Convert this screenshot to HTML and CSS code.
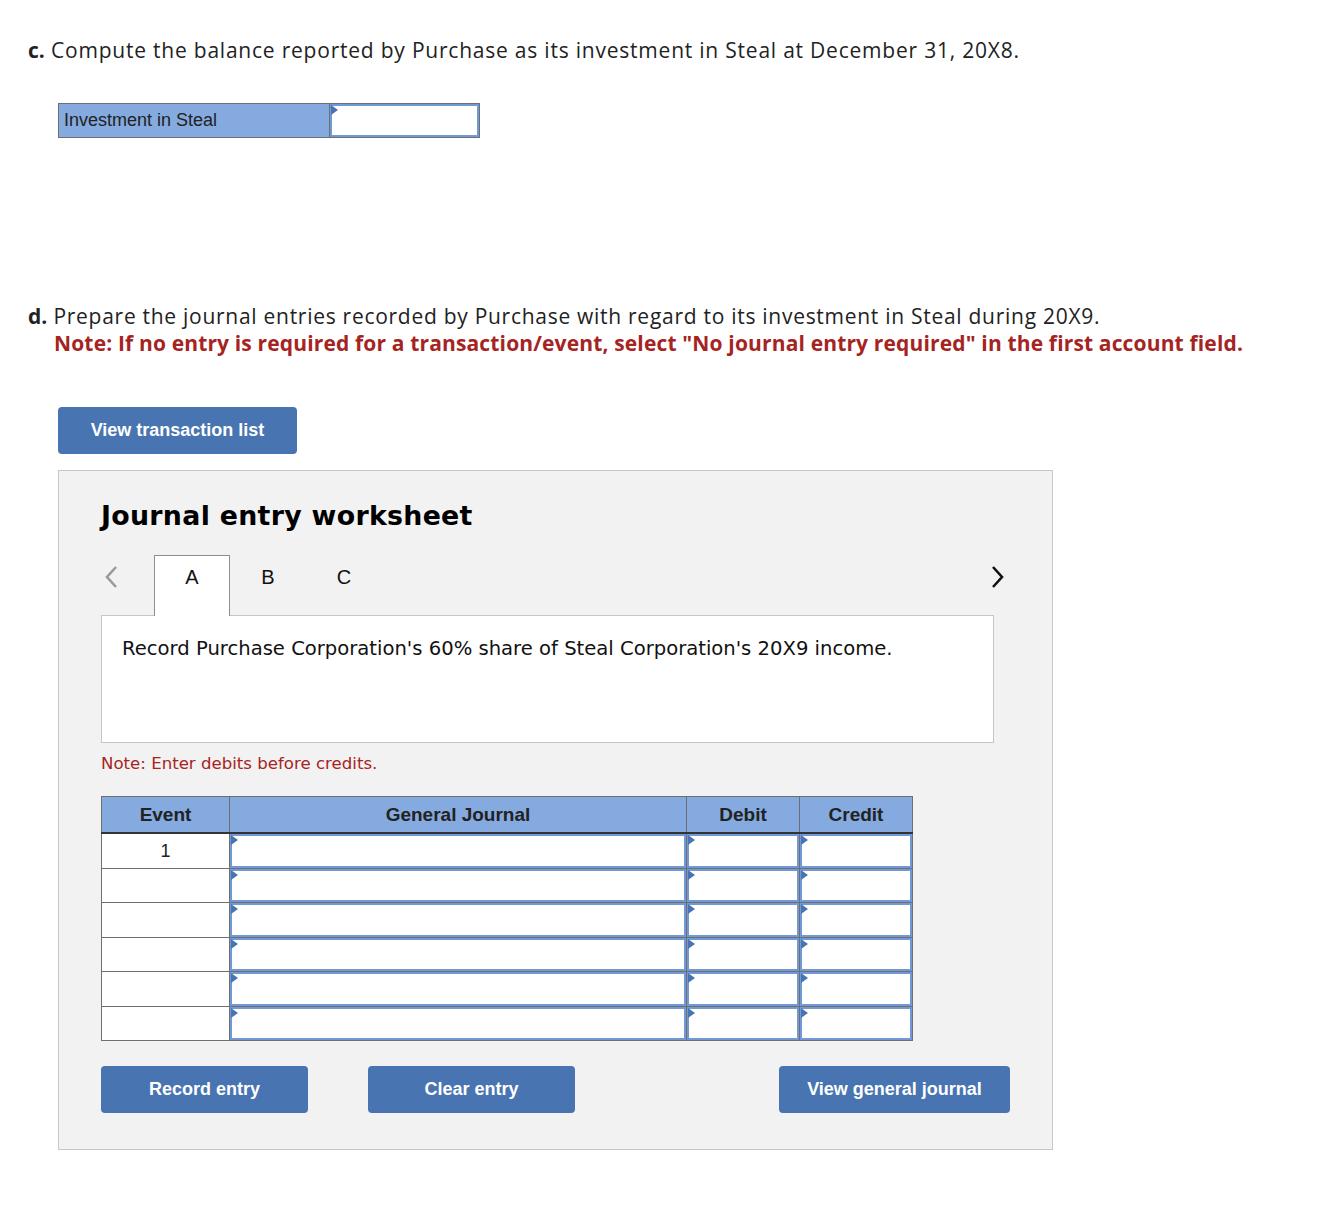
FILE: index.html
```html
<!DOCTYPE html>
<html lang="en">
<head>
  <meta charset="UTF-8">
  <title>Journal entry worksheet</title>
  <link rel="stylesheet" href="styles.css">
</head>
<body>

  <!-- part c -->
  <p class="question"><strong>c.</strong> Compute the balance reported by Purchase as its investment in Steal at December 31, 20X8.</p>

  <table class="answer-table">
    <tr>
      <td class="answer-label">Investment in Steal</td>
      <td class="answer-cell"><div class="field"></div></td>
    </tr>
  </table>

  <!-- part d -->
  <p class="question question-d"><strong>d.</strong> Prepare the journal entries recorded by Purchase with regard to its investment in Steal during 20X9.</p>
  <p class="note-red">Note: If no entry is required for a transaction/event, select "No journal entry required" in the first account field.</p>

  <button class="btn btn-list">View transaction list</button>

  <div class="worksheet">
    <h2>Journal entry worksheet</h2>

    <div class="tabs">
      <span class="arrow arrow-left">
        <svg width="16" height="24" viewBox="0 0 16 24"><path d="M13 2 L4 12 L13 22" fill="none" stroke="#9a9a9a" stroke-width="2.6"/></svg>
      </span>
      <span class="tab active">A</span>
      <span class="tab">B</span>
      <span class="tab">C</span>
      <span class="arrow arrow-right">
        <svg width="16" height="24" viewBox="0 0 16 24"><path d="M3 2 L12 12 L3 22" fill="none" stroke="#111" stroke-width="2.6"/></svg>
      </span>
    </div>

    <div class="description">Record Purchase Corporation's 60% share of Steal Corporation's 20X9 income.</div>

    <p class="note-small">Note: Enter debits before credits.</p>

    <table class="journal">
      <thead>
        <tr>
          <th class="col-event">Event</th>
          <th class="col-account">General Journal</th>
          <th class="col-money">Debit</th>
          <th class="col-money">Credit</th>
        </tr>
      </thead>
      <tbody id="rows"></tbody>
    </table>

    <div class="actions">
      <button class="btn btn-record">Record entry</button>
      <button class="btn btn-clear">Clear entry</button>
      <button class="btn btn-view">View general journal</button>
    </div>
  </div>

  <script>
    const tbody = document.getElementById("rows");

    for (let i = 0; i < 6; i++) {
      const tr = document.createElement("tr");
      const ev = document.createElement("td");
      ev.className = "event";
      ev.textContent = i === 0 ? "1" : "";
      tr.appendChild(ev);

      for (let c = 0; c < 3; c++) {
        const td = document.createElement("td");
        td.className = "input-cell";
        td.innerHTML = '<div class="field"></div>';
        tr.appendChild(td);
      }
      tbody.appendChild(tr);
    }
  </script>

</body>
</html>
```

FILE: styles.css
```css
body {
  margin: 0;
  padding: 0;
  font-family: "Open Sans", Arial, sans-serif;
  color: #222;
  background: white;
}

.question {
  margin: 0;
  padding-left: 28px;
  font-size: 21px;
  line-height: 28px;
  letter-spacing: 0.78px;
  padding-top: 36px;
}

.question strong {
  font-weight: 700;
  letter-spacing: 0;
}

.question-d {
  padding-top: 0;
  margin-top: 164px;
  letter-spacing: 0.72px;
}

.note-red {
  margin: 0 0 0 54px;
  font-size: 21px;
  line-height: 27px;
  font-weight: 700;
  letter-spacing: 0.15px;
  color: #a6241f;
}

/* answer box for part c */
.answer-table {
  border-collapse: collapse;
  margin: 39px 0 0 58px;
  font-family: "Liberation Sans", Arial, sans-serif;
}

.answer-label {
  width: 265px;
  height: 33px;
  background: #84aadf;
  border: 1px solid #6f6f6f;
  padding: 0 0 0 5px;
  font-size: 18px;
  color: #222;
}

.answer-cell {
  width: 149px;
  border: 1px solid #6f6f6f;
}

.answer-cell,
.input-cell {
  position: relative;
  padding: 0;
  background: white;
}

.field {
  box-sizing: border-box;
  height: 100%;
  min-height: 33px;
  border: 2px solid #7199d6;
  background: white;
}

.answer-cell::before,
.input-cell::before {
  content: "";
  position: absolute;
  left: 1px;
  top: 1px;
  border-left: 7px solid #4874b2;
  border-top: 5px solid transparent;
  border-bottom: 5px solid transparent;
}

/* buttons */
.btn {
  flex-shrink: 0;
  font-family: "Liberation Sans", Arial, sans-serif;
  font-size: 18px;
  font-weight: bold;
  color: white;
  background: #4874b2;
  border: none;
  border-radius: 4px;
  height: 47px;
  cursor: pointer;
}

.btn-list {
  display: block;
  width: 239px;
  margin: 50px 0 0 58px;
}

/* worksheet panel */
.worksheet {
  box-sizing: border-box;
  width: 995px;
  margin: 16px 0 0 58px;
  background: #f2f2f2;
  border: 1px solid #c8c8c8;
  padding: 28px 58px 36px 42px;
}

.worksheet h2 {
  margin: 0;
  font-family: "DejaVu Sans", Verdana, sans-serif;
  font-size: 26.8px;
  line-height: 34px;
  font-weight: bold;
  color: #000;
  letter-spacing: 0.3px;
}

.tabs {
  display: flex;
  align-items: flex-start;
  height: 60px;
  margin-top: 22px;
  font-family: "Liberation Sans", Arial, sans-serif;
  font-size: 20px;
  color: #111;
}

.arrow {
  display: flex;
  align-items: center;
  height: 44px;
}

.arrow-left {
  width: 53px;
  padding-left: 2px;
  box-sizing: border-box;
}

.arrow-right {
  margin-left: auto;
  margin-right: -12px;
}

.tab {
  box-sizing: border-box;
  width: 76px;
  height: 44px;
  display: flex;
  align-items: center;
  justify-content: center;
}

.tab.active {
  background: white;
  border: 1px solid #8e8e8e;
  border-bottom: none;
  height: 61px;
  padding-bottom: 17px;
  margin-bottom: -1px;
  position: relative;
  z-index: 1;
}

.description {
  box-sizing: border-box;
  width: 893px;
  height: 128px;
  background: white;
  border: 1px solid #c6c6c6;
  padding: 19px 20px;
  font-family: "DejaVu Sans", Verdana, sans-serif;
  font-size: 19.6px;
  line-height: 28px;
  color: #111;
}

.note-small {
  margin: 10px 0 0;
  font-family: "DejaVu Sans", Verdana, sans-serif;
  font-size: 16.6px;
  line-height: 22px;
  color: #a6241f;
}

/* journal table */
.journal {
  border-collapse: collapse;
  margin-top: 21px;
  font-family: "Liberation Sans", Arial, sans-serif;
}

.journal th {
  height: 35px;
  background: #84aadf;
  border: 1px solid #6f6f6f;
  border-bottom: 2px solid #333;
  font-size: 19px;
  font-weight: bold;
  color: #222;
  padding: 0;
}

.col-event { width: 127px; }
.col-account { width: 456px; }
.col-money { width: 112px; }

.journal td {
  height: 33.5px;
  border: 1px solid #6f6f6f;
  padding: 0;
}

.journal td.event {
  background: white;
  text-align: center;
  vertical-align: top;
  padding-top: 7px;
  height: 26.5px;
  font-size: 18px;
  color: #222;
}

.journal .field {
  height: 33.5px;
  min-height: 0;
}

.actions {
  display: flex;
  margin-top: 25px;
}

.btn-record,
.btn-clear {
  width: 207px;
}

.btn-clear {
  margin-left: 60px;
}

.btn-view {
  width: 231px;
  margin-left: 204px;
}
```
